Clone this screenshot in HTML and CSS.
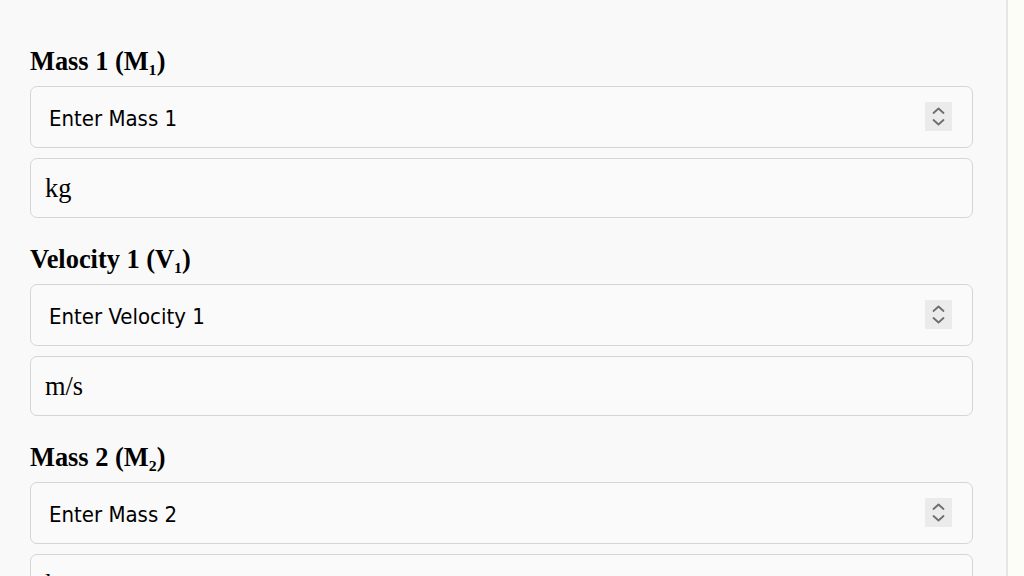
FILE: index.html
```html
<!DOCTYPE html>
<html>
<head>
<meta charset="utf-8">
<link rel="stylesheet" href="styles.css">
</head>
<body>
<div class="page">
  <main class="panel">
    <div class="group">
      <label class="label">Mass 1 (M₁)</label>
      <div class="field field-num">
        <span class="value">Enter Mass 1</span>
        <span class="spin"><svg width="27" height="29" viewBox="0 0 27 29"><path d="M8.5 11 L13.5 6.5 L18.5 11" fill="none" stroke="#6e6e6e" stroke-width="1.8" stroke-linecap="round" stroke-linejoin="round"/><path d="M8.5 18 L13.5 22.5 L18.5 18" fill="none" stroke="#6e6e6e" stroke-width="1.8" stroke-linecap="round" stroke-linejoin="round"/></svg></span>
      </div>
      <div class="field field-unit"><span class="unit">kg</span></div>
    </div>
    <div class="group">
      <label class="label">Velocity 1 (V₁)</label>
      <div class="field field-num">
        <span class="value">Enter Velocity 1</span>
        <span class="spin"><svg width="27" height="29" viewBox="0 0 27 29"><path d="M8.5 11 L13.5 6.5 L18.5 11" fill="none" stroke="#6e6e6e" stroke-width="1.8" stroke-linecap="round" stroke-linejoin="round"/><path d="M8.5 18 L13.5 22.5 L18.5 18" fill="none" stroke="#6e6e6e" stroke-width="1.8" stroke-linecap="round" stroke-linejoin="round"/></svg></span>
      </div>
      <div class="field field-unit"><span class="unit">m/s</span></div>
    </div>
    <div class="group">
      <label class="label">Mass 2 (M₂)</label>
      <div class="field field-num">
        <span class="value">Enter Mass 2</span>
        <span class="spin"><svg width="27" height="29" viewBox="0 0 27 29"><path d="M8.5 11 L13.5 6.5 L18.5 11" fill="none" stroke="#6e6e6e" stroke-width="1.8" stroke-linecap="round" stroke-linejoin="round"/><path d="M8.5 18 L13.5 22.5 L18.5 18" fill="none" stroke="#6e6e6e" stroke-width="1.8" stroke-linecap="round" stroke-linejoin="round"/></svg></span>
      </div>
      <div class="field field-unit"><span class="unit">kg</span></div>
    </div>
  </main>
  <aside class="side"></aside>
</div>
</body>
</html>
```
FILE: styles.css
```css
html, body {
  margin: 0;
  padding: 0;
  height: 100%;
  overflow: hidden;
}
body {
  background: #fdfdf8;
  font-family: "Liberation Serif", "Times New Roman", serif;
  color: #000;
}
.page {
  display: flex;
  height: 576px;
}
.panel {
  width: 1008px;
  box-sizing: border-box;
  background: #f9f9f9;
  border-right: 2px solid #e6e6e6;
  padding: 46px 33px 0 30px;
  display: flex;
  flex-direction: column;
  gap: 26px;
}
.side {
  flex: 1;
}
.group {
  display: flex;
  flex-direction: column;
}
.label {
  font-weight: bold;
  font-size: 26.4px;
  line-height: 30px;
  margin-bottom: 10px;
}
.field {
  box-sizing: border-box;
  border: 1px solid #d5d5d5;
  border-radius: 7px;
  background: #fafafa;
  display: flex;
  align-items: center;
}
.field-num {
  height: 62px;
  padding: 2px 18px 0 18px;
  justify-content: space-between;
}
.field-unit {
  height: 60px;
  margin-top: 10px;
  padding: 0 14px;
}
.value {
  font-family: "DejaVu Sans Condensed", "DejaVu Sans", sans-serif;
  font-size: 22px;
}
.unit {
  font-size: 26.4px;
}
.spin {
  width: 27px;
  height: 29px;
  background: #ebebeb;
  display: flex;
  margin-right: 2px;
  margin-top: -4px;
}
```
